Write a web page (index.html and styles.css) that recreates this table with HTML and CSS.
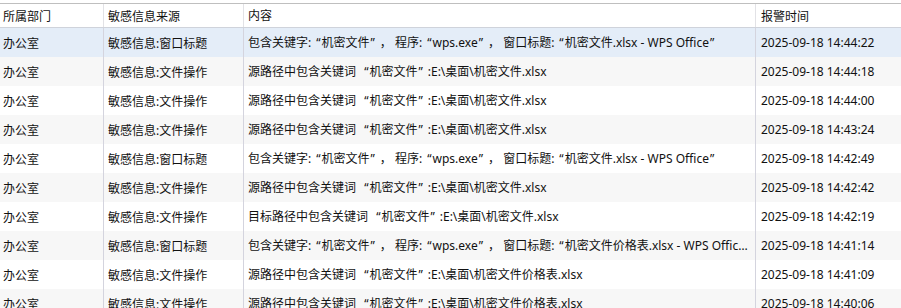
FILE: index.html
```html
<!DOCTYPE html>
<html lang="zh-CN">
<head>
<meta charset="utf-8">
<link rel="stylesheet" href="styles.css">
</head>
<body>
<div class="grid">
  <div class="row head">
    <div class="cell c1">所属部门</div>
    <div class="cell c2">敏感信息来源</div>
    <div class="cell c3">内容</div>
    <div class="cell c4">报警时间</div>
  </div>
  <div class="row sel">
    <div class="cell c1">办公室</div>
    <div class="cell c2">敏感信息:窗口标题</div>
    <div class="cell c3">包含关键字:<span class="ql">“</span>机密文件<span class="qr">”</span>， 程序:<span class="ql">“</span>wps.exe<span class="qr">”</span>， 窗口标题:<span class="ql">“</span>机密文件.xlsx - WPS Office<span class="qr">”</span></div>
    <div class="cell c4">2025-09-18 14:44:22</div>
  </div>
  <div class="row alt">
    <div class="cell c1">办公室</div>
    <div class="cell c2">敏感信息:文件操作</div>
    <div class="cell c3">源路径中包含关键词 <span class="ql">“</span>机密文件<span class="qr">”</span>:E:\桌面\机密文件.xlsx</div>
    <div class="cell c4">2025-09-18 14:44:18</div>
  </div>
  <div class="row">
    <div class="cell c1">办公室</div>
    <div class="cell c2">敏感信息:文件操作</div>
    <div class="cell c3">源路径中包含关键词 <span class="ql">“</span>机密文件<span class="qr">”</span>:E:\桌面\机密文件.xlsx</div>
    <div class="cell c4">2025-09-18 14:44:00</div>
  </div>
  <div class="row alt">
    <div class="cell c1">办公室</div>
    <div class="cell c2">敏感信息:文件操作</div>
    <div class="cell c3">源路径中包含关键词 <span class="ql">“</span>机密文件<span class="qr">”</span>:E:\桌面\机密文件.xlsx</div>
    <div class="cell c4">2025-09-18 14:43:24</div>
  </div>
  <div class="row">
    <div class="cell c1">办公室</div>
    <div class="cell c2">敏感信息:窗口标题</div>
    <div class="cell c3">包含关键字:<span class="ql">“</span>机密文件<span class="qr">”</span>， 程序:<span class="ql">“</span>wps.exe<span class="qr">”</span>， 窗口标题:<span class="ql">“</span>机密文件.xlsx - WPS Office<span class="qr">”</span></div>
    <div class="cell c4">2025-09-18 14:42:49</div>
  </div>
  <div class="row alt">
    <div class="cell c1">办公室</div>
    <div class="cell c2">敏感信息:文件操作</div>
    <div class="cell c3">源路径中包含关键词 <span class="ql">“</span>机密文件<span class="qr">”</span>:E:\桌面\机密文件.xlsx</div>
    <div class="cell c4">2025-09-18 14:42:42</div>
  </div>
  <div class="row">
    <div class="cell c1">办公室</div>
    <div class="cell c2">敏感信息:文件操作</div>
    <div class="cell c3">目标路径中包含关键词 <span class="ql">“</span>机密文件<span class="qr">”</span>:E:\桌面\机密文件.xlsx</div>
    <div class="cell c4">2025-09-18 14:42:19</div>
  </div>
  <div class="row alt">
    <div class="cell c1">办公室</div>
    <div class="cell c2">敏感信息:窗口标题</div>
    <div class="cell c3">包含关键字:<span class="ql">“</span>机密文件<span class="qr">”</span>， 程序:<span class="ql">“</span>wps.exe<span class="qr">”</span>， 窗口标题:<span class="ql">“</span>机密文件价格表.xlsx - WPS Office<span class="qr">”</span></div>
    <div class="cell c4">2025-09-18 14:41:14</div>
  </div>
  <div class="row">
    <div class="cell c1">办公室</div>
    <div class="cell c2">敏感信息:文件操作</div>
    <div class="cell c3">源路径中包含关键词 <span class="ql">“</span>机密文件<span class="qr">”</span>:E:\桌面\机密文件价格表.xlsx</div>
    <div class="cell c4">2025-09-18 14:41:09</div>
  </div>
  <div class="row alt">
    <div class="cell c1">办公室</div>
    <div class="cell c2">敏感信息:文件操作</div>
    <div class="cell c3">源路径中包含关键词 <span class="ql">“</span>机密文件<span class="qr">”</span>:E:\桌面\机密文件价格表.xlsx</div>
    <div class="cell c4">2025-09-18 14:40:06</div>
  </div>
</div>
</body>
</html>
```

FILE: styles.css
```css
html, body {
  margin: 0;
  padding: 0;
  background: #ffffff;
  overflow: hidden;
}
body {
  font-family: "Noto Sans", "Noto Sans CJK SC", sans-serif;
  font-size: 12px;
  color: #111111;
}
.grid {
  margin-top: 3px;
  border-top: 1px solid #bfbfbf;
  display: flex;
  flex-direction: column;
  width: 901px;
}
.row {
  display: grid;
  grid-template-columns: 104px 140px 512px 145px;
  height: 29px;
  background: #ffffff;
}
.row.head {
  height: 23px;
  border-bottom: 1px solid #cfd3db;
}
.row.alt {
  background: #f7f7f7;
}
.row.sel {
  background: #e4edf8;
}
.cell {
  display: flex;
  align-items: center;
  padding-left: 4px;
  white-space: nowrap;
  overflow: hidden;
  text-overflow: ellipsis;
  border-right: 1px solid #d4d4de;
  min-width: 0;
}
.cell.c1 {
  padding-left: 3px;
}
.cell.c3 {
  display: block;
  line-height: 29px;
  padding-right: 5px;
}
.cell.c4 {
  border-right: none;
  padding-left: 5px;
}
.head .cell {
  border-right-color: #e2e2e6;
}
.head .cell.c3 {
  line-height: 23px;
}
.head .cell.c4 {
  border-right: none;
}
.ql {
  padding-left: 5px;
  padding-right: 1px;
}
.qr {
  padding-left: 1px;
  padding-right: 5px;
}
```
